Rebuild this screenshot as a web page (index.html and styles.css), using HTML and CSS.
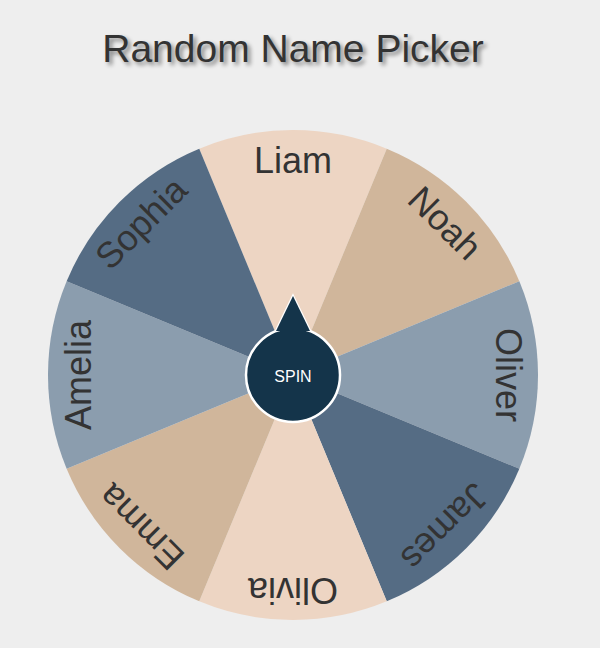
FILE: index.html
```html
<!DOCTYPE html>
<html>
<head>
    <meta charset="utf-8">
    <title>Random Name Picker</title>
    <link rel="stylesheet" href="styles.css">
</head>
<body>
    <div class="page">
        <h1 class="title">Random Name Picker</h1>
        <div class="wheel-box">
            <svg class="wheel" width="490" height="490" viewBox="-245 -245 490 490">
                <!-- one 45deg slice per name, rotated into place -->
                <g transform="rotate(0)">
                    <path class="s1" d="M0 0 L-93.76 -226.35 A245 245 0 0 1 93.76 -226.35 Z"/>
                    <text class="name" y="-215">Liam</text>
                </g>
                <g transform="rotate(45)">
                    <path class="s2" d="M0 0 L-93.76 -226.35 A245 245 0 0 1 93.76 -226.35 Z"/>
                    <text class="name" y="-215">Noah</text>
                </g>
                <g transform="rotate(90)">
                    <path class="s3" d="M0 0 L-93.76 -226.35 A245 245 0 0 1 93.76 -226.35 Z"/>
                    <text class="name" y="-215">Oliver</text>
                </g>
                <g transform="rotate(135)">
                    <path class="s4" d="M0 0 L-93.76 -226.35 A245 245 0 0 1 93.76 -226.35 Z"/>
                    <text class="name" y="-215">James</text>
                </g>
                <g transform="rotate(180)">
                    <path class="s1" d="M0 0 L-93.76 -226.35 A245 245 0 0 1 93.76 -226.35 Z"/>
                    <text class="name" y="-215">Olivia</text>
                </g>
                <g transform="rotate(225)">
                    <path class="s2" d="M0 0 L-93.76 -226.35 A245 245 0 0 1 93.76 -226.35 Z"/>
                    <text class="name" y="-215">Emma</text>
                </g>
                <g transform="rotate(270)">
                    <path class="s3" d="M0 0 L-93.76 -226.35 A245 245 0 0 1 93.76 -226.35 Z"/>
                    <text class="name" y="-215">Amelia</text>
                </g>
                <g transform="rotate(315)">
                    <path class="s4" d="M0 0 L-93.76 -226.35 A245 245 0 0 1 93.76 -226.35 Z"/>
                    <text class="name" y="-215">Sophia</text>
                </g>

                <!-- spin button with pointer -->
                <g class="spin">
                    <path class="knob" d="M0 -79 L-17 -44 L17 -44 Z"/>
                    <circle class="knob" cx="0" cy="0" r="47"/>
                    <path class="knob-fill" d="M0 -79 L-17 -44 L17 -44 Z"/>
                    <text class="spin-label" y="1">SPIN</text>
                </g>
            </svg>
        </div>
    </div>
</body>
</html>
```

FILE: styles.css
```css
body {
    margin: 0;
    background-color: #eeeeee;
    font-family: "Liberation Sans", Arial, sans-serif;
}

.page {
    width: 586px;
    display: flex;
    flex-direction: column;
    align-items: center;
}

.title {
    margin: 24px 0 0 0;
    font-size: 39px;
    font-weight: normal;
    line-height: 50px;
    color: #333333;
    text-shadow: 3px 3px 4px rgba(0, 0, 0, 0.45);
}

.wheel-box {
    margin-top: 56px;
    width: 490px;
    height: 490px;
}

.wheel {
    display: block;
}

.s1 { fill: #edd5c3; }
.s2 { fill: #d0b69b; }
.s3 { fill: #8b9dae; }
.s4 { fill: #556c84; }

.name {
    font-family: "Liberation Sans", Arial, sans-serif;
    font-size: 36px;
    fill: #333333;
    text-anchor: middle;
    dominant-baseline: central;
}

.knob {
    fill: #14344a;
    stroke: #ffffff;
    stroke-width: 2.5;
}

.knob-fill {
    fill: #14344a;
}

.spin-label {
    font-family: "Liberation Sans", Arial, sans-serif;
    font-size: 16px;
    fill: #ffffff;
    text-anchor: middle;
    dominant-baseline: central;
}
```
